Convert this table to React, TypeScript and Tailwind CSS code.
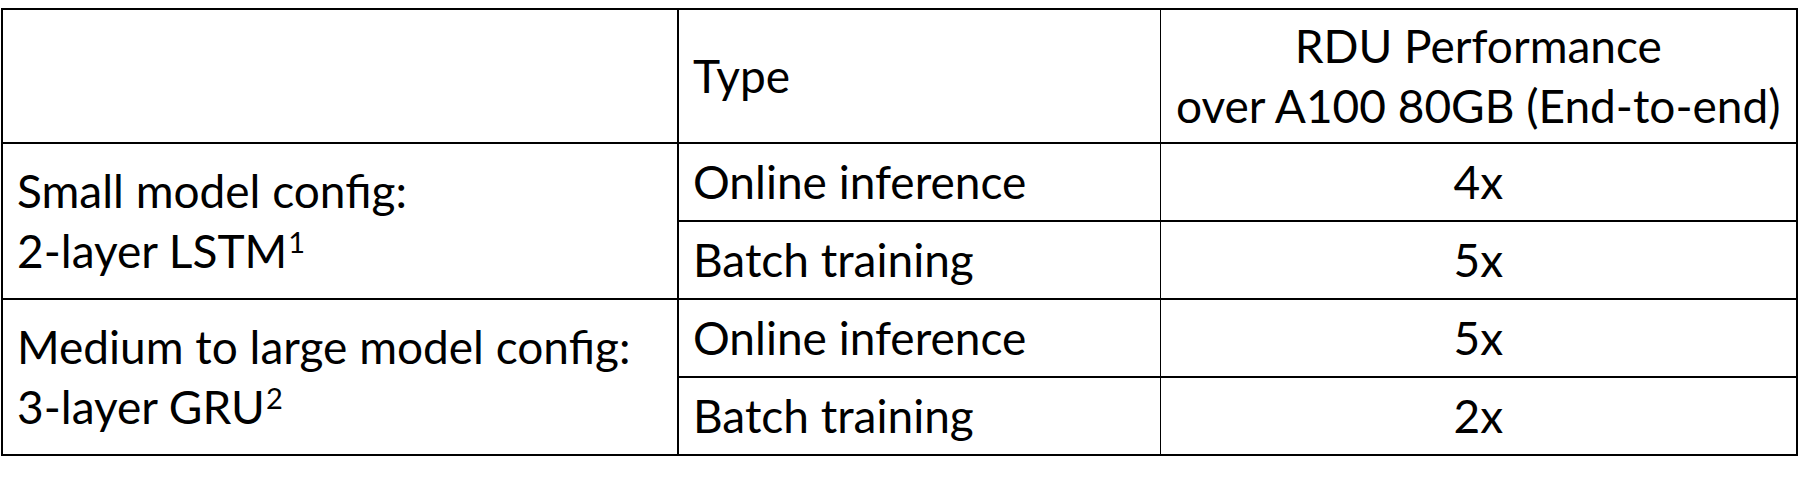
const groups = [
  {
    title: "Small model config:",
    model: "2-layer LSTM",
    note: "1",
    rows: [
      { type: "Online inference", perf: "4x" },
      { type: "Batch training", perf: "5x" },
    ],
  },
  {
    title: "Medium to large model config:",
    model: "3-layer GRU",
    note: "2",
    rows: [
      { type: "Online inference", perf: "5x" },
      { type: "Batch training", perf: "2x" },
    ],
  },
];

export default function App() {
  return (
    <div className="w-[1800px] h-[479px] bg-white pt-[8px] pl-[1px] font-['Lato',sans-serif] text-black">
      <table className="w-[1797px] border-collapse border-2 border-black text-[46px] leading-[60px]">
        <colgroup>
          <col className="w-[676px]" />
          <col className="w-[482px]" />
          <col />
        </colgroup>
        <tbody>
          <tr className="h-[134px]">
            <td className="border-2 border-black" />
            <td className="border border-black px-[14px] align-middle">Type</td>
            <td className="border border-black text-center align-middle">
              RDU Performance
              <br />
              over A100 80GB (End-to-end)
            </td>
          </tr>
          {groups.map((g) =>
            g.rows.map((r, i) => (
              <tr key={g.title + i} className="h-[78px] border-t-2 border-black">
                {i === 0 && (
                  <td rowSpan={2} className="border-2 border-black px-[14px] align-middle">
                    {g.title}
                    <br />
                    {g.model}
                    <sup className="text-[29px] -top-[15px] ml-[1px]">{g.note}</sup>
                  </td>
                )}
                <td className="border-x border-y-2 border-black px-[14px] align-middle">{r.type}</td>
                <td className="border-x border-y-2 border-black text-center align-middle">{r.perf}</td>
              </tr>
            ))
          )}
        </tbody>
      </table>
    </div>
  );
}
